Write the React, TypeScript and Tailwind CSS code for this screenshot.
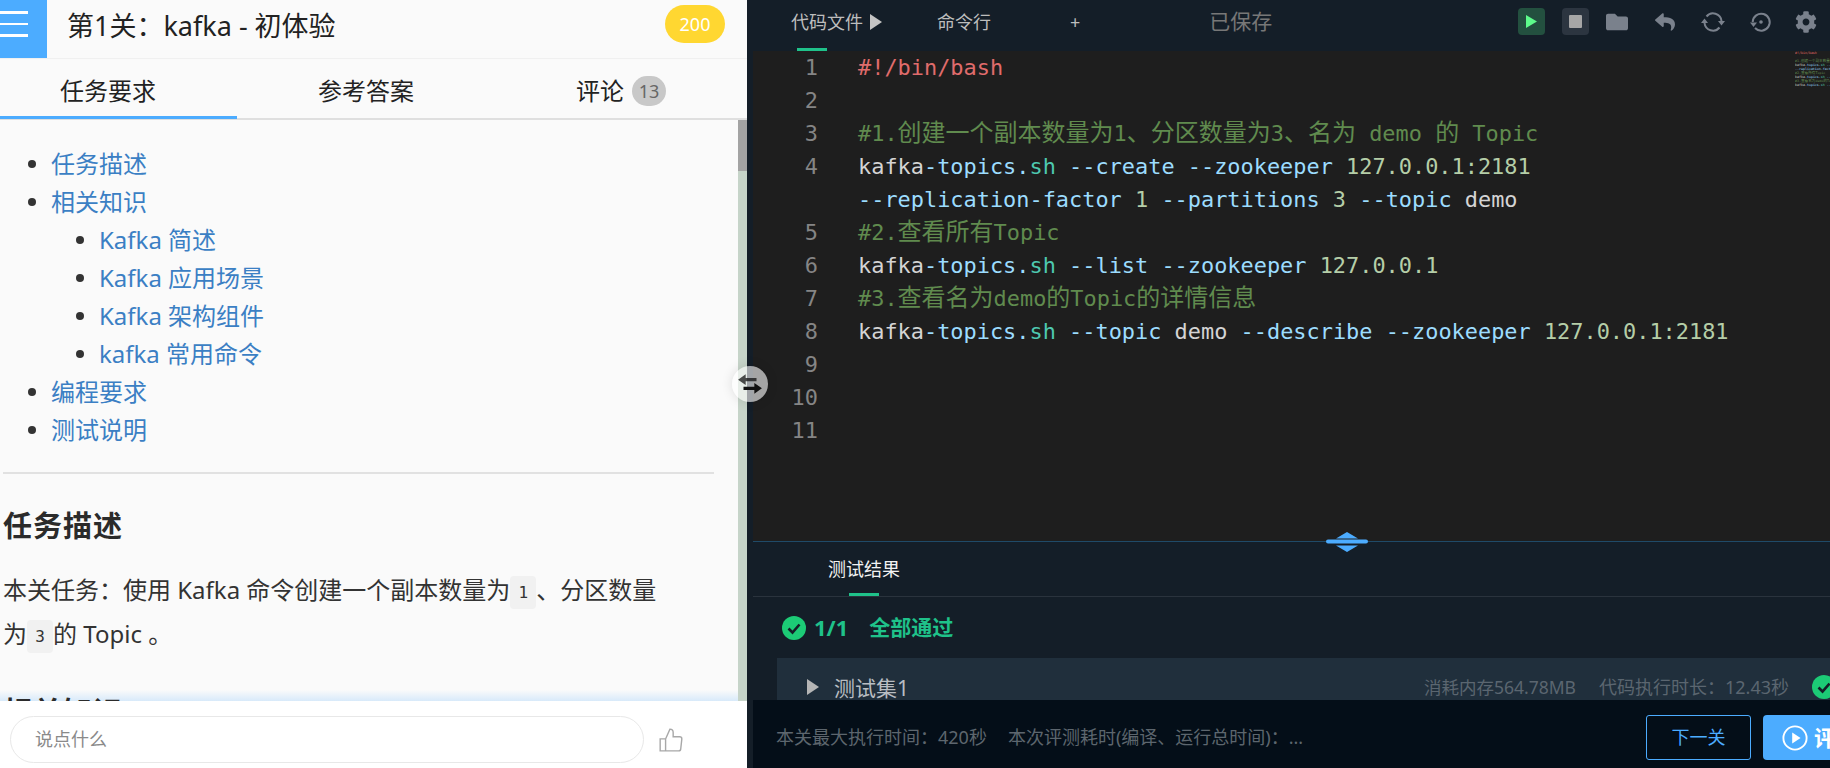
import { FaFolder, FaReply, FaCog } from 'react-icons/fa';

const cjk = '"Noto Sans", "Noto Sans CJK SC", sans-serif';

const toc = [
  { text: '任务描述', sub: false },
  { text: '相关知识', sub: false },
  { text: 'Kafka 简述', sub: true },
  { text: 'Kafka 应用场景', sub: true },
  { text: 'Kafka 架构组件', sub: true },
  { text: 'kafka 常用命令', sub: true },
  { text: '编程要求', sub: false },
  { text: '测试说明', sub: false },
];

function Z({ children }: { children: string }) {
  // 中文在编辑器里比英文字号大一点
  return <span className="text-[1.095em] leading-none [font-family:'Noto_Sans_CJK_SC',sans-serif]">{children}</span>;
}

const P = ({ c }: { c: string }) => <span className="text-[#9cdcfe]">{c}</span>;
const N = ({ c }: { c: string }) => <span className="text-[#b5cea8]">{c}</span>;
const Kafka = () => (
  <>
    <span className="text-[#d4d4d4]">kafka</span>
    <P c="-topics." />
    <span className="text-[#4ec9b0]">sh</span>
  </>
);

const lines = [
  { n: '1', body: <span className="text-[#e06c6c]">#!/bin/bash</span> },
  { n: '2', body: null },
  {
    n: '3',
    body: (
      <span className="text-[#608b4e]">
        #1.<Z>创建一个副本数量为</Z>1<Z>、分区数量为</Z>3<Z>、名为</Z> demo <Z>的</Z> Topic
      </span>
    ),
  },
  {
    n: '4',
    body: (
      <>
        <Kafka /> <P c="--create --zookeeper" /> <N c="127.0.0.1:2181" />
      </>
    ),
  },
  {
    n: '',
    body: (
      <>
        <P c="--replication-factor" /> <N c="1" /> <P c="--partitions" /> <N c="3" /> <P c="--topic" />{' '}
        <span className="text-[#d4d4d4]">demo</span>
      </>
    ),
  },
  {
    n: '5',
    body: (
      <span className="text-[#608b4e]">
        #2.<Z>查看所有</Z>Topic
      </span>
    ),
  },
  {
    n: '6',
    body: (
      <>
        <Kafka /> <P c="--list --zookeeper" /> <N c="127.0.0.1" />
      </>
    ),
  },
  {
    n: '7',
    body: (
      <span className="text-[#608b4e]">
        #3.<Z>查看名为</Z>demo<Z>的</Z>Topic<Z>的详情信息</Z>
      </span>
    ),
  },
  {
    n: '8',
    body: (
      <>
        <Kafka /> <P c="--topic" /> <span className="text-[#d4d4d4]">demo</span> <P c="--describe --zookeeper" />{' '}
        <N c="127.0.0.1:2181" />
      </>
    ),
  },
  { n: '9', body: null },
  { n: '10', body: null },
  { n: '11', body: null },
];

function Chip({ children }: { children: string }) {
  return (
    <span className="inline-flex h-[33px] w-[26px] items-center justify-center rounded-[4px] bg-[#f1f1f1] align-middle font-['DejaVu_Sans_Mono',monospace] text-[16px] text-[#333]">
      {children}
    </span>
  );
}

function CheckDot({ className }: { className: string }) {
  return (
    <svg viewBox="0 0 24 24" className={className}>
      <circle cx="12" cy="12" r="12" fill="#1ccb76" />
      <path d="M6.5 12.5l4 4 7-8" fill="none" stroke="#141e28" strokeWidth="2.6" />
    </svg>
  );
}

function TaskPanel() {
  return (
    <div className="flex h-[768px] w-[747px] shrink-0 flex-col bg-[#fafafa]">
      <div className="flex h-[59px] shrink-0 items-start border-b border-[#f0f0f0] pr-[22px]">
        <div className="flex h-[58px] w-[47px] shrink-0 flex-col gap-[9px] bg-[#4cacff] pt-[11px]">
          <div className="h-[2.5px] w-[28px] bg-white" />
          <div className="h-[2.5px] w-[28px] bg-white" />
          <div className="h-[2.5px] w-[28px] bg-white" />
        </div>
        <div className="ml-5 flex-1 text-[27px] leading-[52px] text-[#222]">第1关&#xFF1A;kafka - 初体验</div>
        <div className="mt-[5px] flex h-[38px] w-[60px] items-center justify-center rounded-[19px] bg-[#ffd731] text-[18px] text-white">
          200
        </div>
      </div>
      <div className="flex h-[61px] shrink-0 border-b-[2px] border-[#dfdfdf] text-[24px] text-[#222]">
        <div className="h-[60px] w-[237px] border-b-[3px] border-[#4cacff] pl-[60px] leading-[64px]">任务要求</div>
        <div className="w-[237px] pl-[81px] leading-[64px]">参考答案</div>
        <div className="flex h-[64px] items-center pl-[102px]">
          评论
          <span className="ml-2 flex h-[30px] w-[34px] items-center justify-center rounded-full bg-[#c8c8c8] text-[18px] text-[#666]">
            13
          </span>
        </div>
      </div>
      <div className="relative min-h-0 flex-1 overflow-hidden">
        <div className="absolute bottom-0 left-0 h-[11px] w-[738px] bg-gradient-to-b from-transparent to-[#d8eafa]" />
        <div className="absolute right-0 top-0 h-full w-[9px] bg-[#c6d4c9]">
          <div className="h-[51px] w-full bg-[#a3a3a3]" />
        </div>
        <div className="relative w-[738px] pl-[3px] text-[24px]">
          <ul className="w-[711px] pt-[25px]">
            {toc.map((item) => (
              <li key={item.text} className={`flex h-[38px] items-center ${item.sub ? 'pl-[48px]' : ''}`}>
                <span className="ml-[25px] mr-[15px] h-[8px] w-[8px] rounded-full bg-[#333]" />
                <span className="text-[#3b7fc4]">{item.text}</span>
              </li>
            ))}
          </ul>
          <div className="mt-[23px] h-[2px] w-[711px] bg-[#e1e1e1]" />
          <h3 className="mt-[26px] text-[29px] font-bold leading-[52px] tracking-[1px] text-[#2b2b2b]">任务描述</h3>
          <p className="mt-[16px] w-[665px] leading-[44px] text-[#333]">
            本关任务&#xFF1A;使用 Kafka 命令创建一个副本数量为<Chip>1</Chip>、分区数量为<Chip>3</Chip>的 Topic 。
          </p>
          <h3 className="mt-[30px] text-[29px] font-bold leading-[52px] tracking-[1px] text-[#2b2b2b]">相关知识</h3>
        </div>
      </div>
      <div className="flex h-[67px] shrink-0 items-center bg-white pl-[10px] pt-[10px]">
        <div className="flex h-[47px] w-[634px] items-center rounded-[24px] border border-[#e8e8e8] pl-6 text-[18px] text-[#8a8a8a]">
          说点什么
        </div>
        <svg viewBox="0 0 24 24" className="ml-[14px] h-[26px] w-[26px] text-[#a8a8a8]" fill="none" stroke="currentColor" strokeWidth="1.3">
          <path d="M2 11h5v11H2zM7 11l4-9c2 0 3 1 3 3v4h6c1 0 2 1 2 2l-1 9c0 1-1 2-2 2H7" />
        </svg>
      </div>
    </div>
  );
}

function Toolbar() {
  return (
    <div className="flex h-[51px] shrink-0 bg-[#141e28]">
      <div className="relative flex h-[48px] w-[150px] items-center pb-[4px] pl-[44px] text-[18px] text-[#bdbdbd]">
        代码文件
        <svg viewBox="0 0 12 16" className="ml-[7px] h-[18px] w-[12px]" fill="#c4c4c4">
          <path d="M0 0l12 8-12 8z" />
        </svg>
        <div className="absolute -bottom-[3px] left-[50px] h-[3px] w-[30px] bg-[#1fc28a]" />
      </div>
      <div className="flex h-[48px] items-center pb-[4px] pl-[40px] text-[18px] text-[#bdbdbd]">命令行</div>
      <div className="flex h-[48px] items-center pb-[4px] pl-[79px] text-[18px] text-[#bdbdbd]">+</div>
      <div className="flex h-[48px] items-center pb-[4px] pl-[129px] text-[21px] text-[#777]">已保存</div>
      <div className="ml-auto flex h-[43px] items-center pr-[13px] text-[#7a818c]">
        <div className="flex h-[27px] w-[27px] items-center justify-center rounded-[4px] bg-[#23503f]">
          <svg viewBox="0 0 12 14" className="h-[13px] w-[11px]" fill="#5dfc8b">
            <path d="M0 0l12 7-12 7z" />
          </svg>
        </div>
        <div className="ml-[17px] flex h-[27px] w-[27px] items-center justify-center rounded-[4px] bg-[#2c3540]">
          <div className="h-[13px] w-[13px] rounded-[1px] bg-[#a6a6a6]" />
        </div>
        <FaFolder className="ml-[17px] h-[22px] w-[22px]" />
        <FaReply className="ml-[27px] h-[20px] w-[20px]" />
        <svg viewBox="0 0 24 24" className="ml-[26px] h-[24px] w-[24px]" fill="none" stroke="currentColor" strokeWidth="2">
          <path d="M5.5 6.5A8.5 8.5 0 0 1 20.5 11" />
          <path d="M18.5 17.5A8.5 8.5 0 0 1 3.5 13" />
          <path d="M17 11h7l-3.5 4.5zM0 13h7L3.5 8.5z" fill="currentColor" stroke="none" />
        </svg>
        <svg viewBox="0 0 24 24" className="ml-[24px] h-[24px] w-[24px]" fill="none" stroke="currentColor" strokeWidth="2">
          <path d="M3.7 12A8.5 8.5 0 1 1 6 18" />
          <path d="M1 12.5h7L4.5 17z" fill="currentColor" stroke="none" />
          <circle cx="12" cy="12" r="1.8" fill="currentColor" stroke="none" />
        </svg>
        <FaCog className="ml-[22px] h-[22px] w-[22px]" />
      </div>
    </div>
  );
}

function Editor() {
  return (
    <div className="relative ml-[6px] h-[490px] shrink-0 overflow-hidden bg-[#1e1e1e] font-['DejaVu_Sans_Mono',monospace] text-[21.92px] leading-[33px]">
      <div>
        {lines.map((l, i) => (
          <div key={i} className="flex h-[33px]">
            <div className="w-[65px] shrink-0 text-right text-[#858585]">{l.n}</div>
            <div className="ml-[40px] whitespace-pre text-[#d4d4d4]">{l.body}</div>
          </div>
        ))}
      </div>
      {/* minimap */}
      <div className="absolute left-[1042px] top-0 w-[40px] overflow-hidden text-[3.3px] leading-[4px]">
        {lines.map((l, i) => (
          <div key={i} className="h-[4px] whitespace-pre text-[#d4d4d4]">
            {l.body}
          </div>
        ))}
      </div>
    </div>
  );
}

function Results() {
  return (
    <div className="ml-[6px] min-h-0 flex-1 overflow-hidden border-t border-[#1f4a68] bg-[#141e28]">
      <div className="flex h-[55px] border-b border-[#2a333d]">
        <div className="relative ml-[75px] flex h-[54px] w-[72px] items-center text-[18px] text-[#f2f2f2]">
          测试结果
          <div className="absolute bottom-0 left-[21px] h-[3px] w-[30px] bg-[#1fc28a]" />
        </div>
      </div>
      <div className="flex h-[61px] items-center pl-[29px] text-[22px] font-bold text-[#1fc28a]">
        <CheckDot className="h-[24px] w-[24px]" />
        <span className="ml-2">1/1</span>
        <span className="ml-[21px] text-[21px]">全部通过</span>
      </div>
      <div className="-mr-[6px] ml-[24px] flex h-[60px] items-start bg-[#202f3c] pl-[30px] pt-[15px] text-[21px] text-[#b8bdc2]">
        <svg viewBox="0 0 12 16" className="mt-[5px] h-[18px] w-[12px]" fill="#b5b5b5">
          <path d="M0 0l12 8-12 8z" />
        </svg>
        <span className="ml-[15px]">测试集1</span>
        <span className="ml-auto mt-[1px] text-[17.5px] text-[#5b6670]">消耗内存564.78MB</span>
        <span className="ml-[23px] mt-[1px] text-[18px] text-[#5b6670]">代码执行时长&#xFF1A;12.43秒</span>
        <CheckDot className="ml-[23px] mt-[2px] h-[24px] w-[24px] shrink-0" />
      </div>
    </div>
  );
}

function Footer() {
  return (
    <div className="ml-[6px] flex h-[68px] shrink-0 items-center overflow-hidden bg-[#040e18] pl-[23px] pt-[7px] text-[18px] text-[#5d666e]">
      <span>本关最大执行时间&#xFF1A;420秒</span>
      <span className="ml-[21px]">本次评测耗时(编译、运行总时间)&#xFF1A;...</span>
      <button className="ml-auto flex h-[45px] w-[105px] shrink-0 items-center justify-center rounded-[3px] border border-[#4cacff] text-[18px] text-[#4cacff]">
        下一关
      </button>
      <button className="-mr-[37px] ml-[12px] flex h-[45px] w-[104px] shrink-0 items-center justify-start whitespace-nowrap rounded-[4px] bg-[#4cacff] pl-[19px] text-[22px] font-bold text-white">
        <svg viewBox="0 0 28 28" className="h-[26px] w-[26px] shrink-0" fill="none" stroke="#fff" strokeWidth="2">
          <circle cx="14" cy="14" r="12.5" />
          <path d="M11 8l9 6-9 6z" fill="#fff" stroke="none" />
        </svg>
        <span className="ml-[6px]">评测</span>
      </button>
    </div>
  );
}

export default function App() {
  return (
    <div className="relative flex h-[768px] w-[1830px] overflow-hidden bg-[#141e28]" style={{ fontFamily: cjk }}>
      <TaskPanel />
      <div className="flex min-w-0 flex-1 flex-col">
        <Toolbar />
        <Editor />
        <Results />
        <Footer />
      </div>
      {/* 拖动手柄 */}
      <div className="absolute left-[732px] top-[366px] flex h-[36px] w-[36px] items-center justify-center rounded-full bg-white/60 shadow-[0_0_12px_rgba(0,0,0,0.12)]">
        <svg viewBox="0 0 24 24" className="h-[26px] w-[26px]" fill="#111">
          <path d="M1 8l7-5v3.5h10v3H8V13z" opacity="0.75" />
          <path d="M23 16l-7-5v3.5H6v3h10V21z" />
        </svg>
      </div>
      {/* 上下拖动 */}
      <div className="absolute left-[1326px] top-[532px] flex h-[20px] w-[42px] flex-col items-center">
        <svg viewBox="0 0 42 20" className="h-[20px] w-[42px]" fill="#4cacff">
          <path d="M10 6.5L21 0l11 6.5zM10 13.5L21 20l11-6.5z" />
          <rect x="0" y="7.5" width="42" height="4" rx="2" />
        </svg>
      </div>
    </div>
  );
}
